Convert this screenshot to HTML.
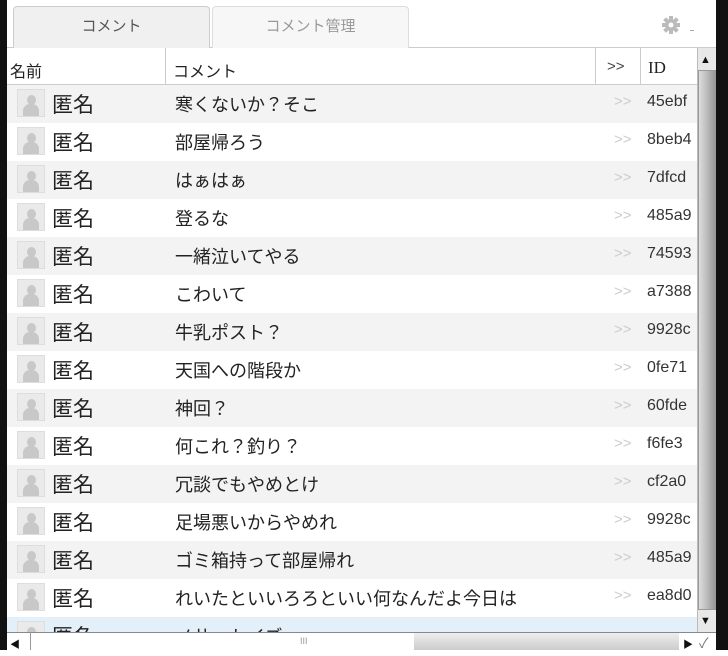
<!DOCTYPE html>
<html><head><meta charset="utf-8"><style>
*{margin:0;padding:0;box-sizing:border-box}
body{width:728px;height:656px;background:#fff;position:relative;overflow:hidden;font-family:"Liberation Sans","Noto Sans CJK JP",sans-serif;color:#222}
.a{position:absolute}
.row{position:absolute;left:5px;width:692px;height:38px}
.av{position:absolute;left:12px;top:4px;width:28px;height:28px;border:1px solid #ddd;background:#eaeaea}
.av:before{content:"";position:absolute;left:9px;top:5px;width:9px;height:10px;border-radius:50%;background:#c8c8c8}
.av:after{content:"";position:absolute;left:5px;top:14px;width:16px;height:12px;border-radius:7px 7px 0 0;background:#c8c8c8}
.nm{position:absolute;left:47px;top:4px;font-size:21px}
.cm{position:absolute;left:170px;top:6px;font-size:18px}
.ar{position:absolute;left:609px;top:8px;font-size:15px;color:#ccc}
.id{position:absolute;left:642px;top:8px;font-size:16px;color:#333;width:50px;overflow:hidden;white-space:nowrap}
</style></head><body>
<div class="a" style="left:5px;top:0;width:713px;height:48px;background:#fff;border-bottom:1px solid #ccc"></div>
<div class="a" style="left:13px;top:6px;width:197px;height:43px;background:#f0f0f0;border:1px solid #ccc;border-bottom:none;border-radius:4px 4px 0 0;font-size:15px;color:#555;text-align:center;line-height:40px">コメント</div>
<div class="a" style="left:212px;top:6px;width:197px;height:42px;background:#f7f7f7;border:1px solid #ddd;border-bottom:none;border-radius:4px 4px 0 0;font-size:15px;color:#999;text-align:center;line-height:40px">コメント管理</div>
<svg class="a" style="left:661px;top:15px" width="20" height="20" viewBox="0 0 20 20"><g fill="#bbb"><circle cx="10" cy="10" r="6"/><rect x="8" y="1" width="4" height="18"/><rect x="1" y="8" width="18" height="4"/><rect x="8" y="1" width="4" height="18" transform="rotate(45 10 10)"/><rect x="8" y="1" width="4" height="18" transform="rotate(-45 10 10)"/></g><circle cx="10" cy="10" r="2.5" fill="#fff"/></svg>
<div class="a" style="left:690px;top:30px;width:4px;height:1px;background:#aaa"></div>
<div class="a" style="left:5px;top:48px;width:692px;height:37px;background:#fff;border-bottom:1px solid #ccc"></div>
<div class="a" style="left:165px;top:48px;width:1px;height:37px;background:#ccc"></div>
<div class="a" style="left:595px;top:48px;width:1px;height:37px;background:#ccc"></div>
<div class="a" style="left:640px;top:48px;width:1px;height:37px;background:#ccc"></div>
<div class="a" style="left:10px;top:58px;font-size:16px">名前</div>
<div class="a" style="left:173px;top:58px;font-size:16px">コメント</div>
<div class="a" style="left:607px;top:58px;font-size:15px;color:#444">&gt;&gt;</div>
<div class="a" style="left:648px;top:58px;font-size:17px;font-family:'Liberation Serif',serif">ID</div>
<div class="row" style="top:85px;background:#f3f3f3"><div class="av"></div><div class="nm">匿名</div><div class="cm">寒くないか？そこ</div><div class="ar">&gt;&gt;</div><div class="id">45ebf</div></div>
<div class="row" style="top:123px;background:#fff"><div class="av"></div><div class="nm">匿名</div><div class="cm">部屋帰ろう</div><div class="ar">&gt;&gt;</div><div class="id">8beb4</div></div>
<div class="row" style="top:161px;background:#f3f3f3"><div class="av"></div><div class="nm">匿名</div><div class="cm">はぁはぁ</div><div class="ar">&gt;&gt;</div><div class="id">7dfcd</div></div>
<div class="row" style="top:199px;background:#fff"><div class="av"></div><div class="nm">匿名</div><div class="cm">登るな</div><div class="ar">&gt;&gt;</div><div class="id">485a9</div></div>
<div class="row" style="top:237px;background:#f3f3f3"><div class="av"></div><div class="nm">匿名</div><div class="cm">一緒泣いてやる</div><div class="ar">&gt;&gt;</div><div class="id">74593</div></div>
<div class="row" style="top:275px;background:#fff"><div class="av"></div><div class="nm">匿名</div><div class="cm">こわいて</div><div class="ar">&gt;&gt;</div><div class="id">a7388</div></div>
<div class="row" style="top:313px;background:#f3f3f3"><div class="av"></div><div class="nm">匿名</div><div class="cm">牛乳ポスト？</div><div class="ar">&gt;&gt;</div><div class="id">9928c</div></div>
<div class="row" style="top:351px;background:#fff"><div class="av"></div><div class="nm">匿名</div><div class="cm">天国への階段か</div><div class="ar">&gt;&gt;</div><div class="id">0fe71</div></div>
<div class="row" style="top:389px;background:#f3f3f3"><div class="av"></div><div class="nm">匿名</div><div class="cm">神回？</div><div class="ar">&gt;&gt;</div><div class="id">60fde</div></div>
<div class="row" style="top:427px;background:#fff"><div class="av"></div><div class="nm">匿名</div><div class="cm">何これ？釣り？</div><div class="ar">&gt;&gt;</div><div class="id">f6fe3</div></div>
<div class="row" style="top:465px;background:#f3f3f3"><div class="av"></div><div class="nm">匿名</div><div class="cm">冗談でもやめとけ</div><div class="ar">&gt;&gt;</div><div class="id">cf2a0</div></div>
<div class="row" style="top:503px;background:#fff"><div class="av"></div><div class="nm">匿名</div><div class="cm">足場悪いからやめれ</div><div class="ar">&gt;&gt;</div><div class="id">9928c</div></div>
<div class="row" style="top:541px;background:#f3f3f3"><div class="av"></div><div class="nm">匿名</div><div class="cm">ゴミ箱持って部屋帰れ</div><div class="ar">&gt;&gt;</div><div class="id">485a9</div></div>
<div class="row" style="top:579px;background:#fff"><div class="av"></div><div class="nm">匿名</div><div class="cm">れいたといいろろといい何なんだよ今日は</div><div class="ar">&gt;&gt;</div><div class="id">ea8d0</div></div>
<div class="row" style="top:617px;height:16px;background:#e3f0fa;overflow:hidden"><div class="av"></div><div class="nm">匿名</div><div class="cm">メサ　トイズ</div></div>
<div class="a" style="left:697px;top:48px;width:19px;height:585px;background:#e8e8e8;border-left:1px solid #bbb"></div>
<div class="a" style="left:700px;top:54px;font-size:11px;color:#111">▲</div>
<div class="a" style="left:698px;top:70px;width:18px;height:540px;background:linear-gradient(90deg,#ddd,#bbb 50%,#999);border:1px solid #999"></div>
<div class="a" style="left:700px;top:615px;font-size:11px;color:#111">▼</div>
<div class="a" style="left:5px;top:632px;width:711px;height:18px;background:#fff;border-top:1px solid #888"></div>
<div class="a" style="left:10px;top:636px;font-size:10px;color:#111">◀</div>
<div class="a" style="left:30px;top:632px;width:1px;height:18px;background:#999"></div>
<div class="a" style="left:414px;top:633px;width:265px;height:17px;background:linear-gradient(#eee,#ccc)"></div>
<div class="a" style="left:300px;top:636px;font-size:9px;color:#999">III</div>
<div class="a" style="left:683px;top:636px;font-size:10px;color:#111">▶</div>
<div class="a" style="left:699px;top:633px;font-size:14px;color:#777">✓</div>
<div class="a" style="left:0;top:0;width:7px;height:650px;background:#111;z-index:10"></div>
<div class="a" style="left:716px;top:0;width:12px;height:650px;background:#111;z-index:10"></div>
</body></html>
